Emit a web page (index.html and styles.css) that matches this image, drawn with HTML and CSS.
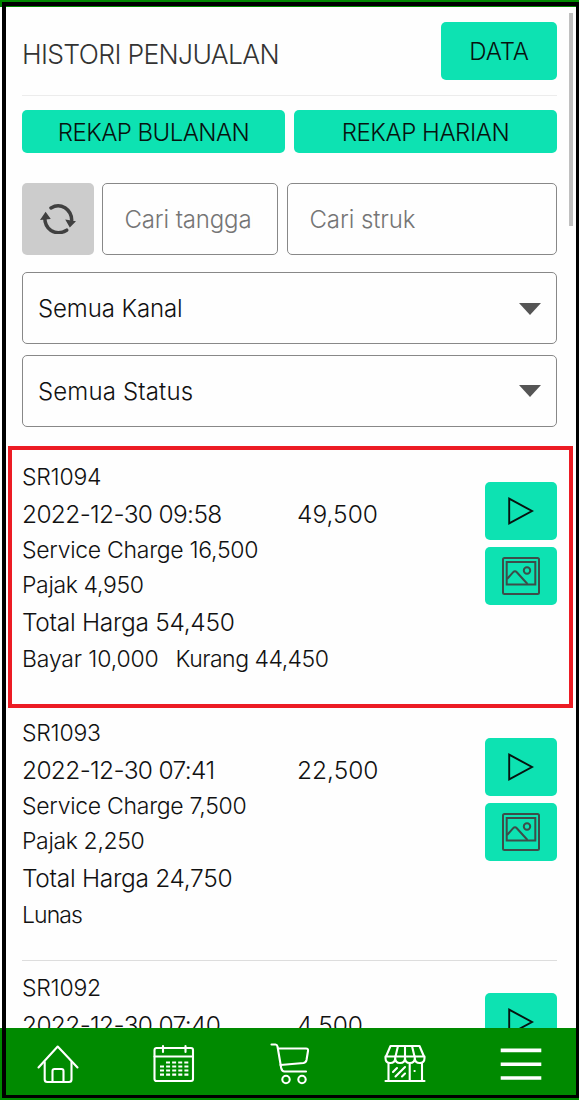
FILE: index.html
```html
<!DOCTYPE html>
<html lang="id">
<head>
<meta charset="utf-8">
<title>Histori Penjualan</title>
<link rel="stylesheet" href="styles.css">
</head>
<body>
<svg class="sprite" aria-hidden="true">
  <symbol id="play" viewBox="0 0 26 28"><path d="M1.2 1.6V26.4L24 14Z" fill="none" stroke="#07120f" stroke-width="1.9"/></symbol>
  <symbol id="photo" viewBox="0 0 38 38"><g fill="none" stroke="#3d4d49" stroke-width="2"><rect x="1" y="1" width="36" height="36" rx="1.5"/><rect x="4.7" y="5" width="28.6" height="22.5"/><path d="M5 22L11.2 15.2Q13 13.3 14.8 15.2L25.5 27"/><circle cx="25" cy="13.5" r="3.2"/></g></symbol>
</svg>
<div class="screen">
  <div class="topbar"></div>
  <main class="content">
    <header class="header">
      <h1 class="title"><span>HISTORI PENJUALAN</span></h1>
      <button class="btn btn-data"><span>DATA</span></button>
    </header>
    <div class="recaps">
      <button class="btn"><span class="monthly">REKAP BULANAN</span></button>
      <button class="btn"><span class="daily">REKAP HARIAN</span></button>
    </div>
    <div class="search">
      <button class="refresh">
        <svg width="36" height="30" viewBox="0 0 36 30"><g fill="none" stroke="#404040" stroke-width="3.5" stroke-linecap="round"><path d="M11 3.9Q18 -.2 25 3.7Q31.5 8 31.7 16"/><path d="M26.7 26.2Q18.5 31 11 26.5Q4.8 22.3 4.8 14"/></g><path d="M25.2 15.6L36 17.2L29.8 23.5ZM0 15.9L5.6 7.8L10.8 15Z" fill="#404040"/></svg>
      </button>
      <div class="field field-date"><span class="clip"><span class="ph-date">Cari tanggal</span></span></div>
      <div class="field field-receipt"><span class="ph-receipt">Cari struk</span></div>
    </div>
    <div class="select"><span class="channel">Semua Kanal</span><i class="caret"></i></div>
    <div class="select"><span class="status">Semua Status</span><i class="caret"></i></div>
    <section class="sales">
      <article class="sale selected">
        <div class="lines">
          <p class="code"><span>SR1094</span></p>
          <p class="date"><span>2022-12-30 09:58</span><span class="amount">49,500</span></p>
          <p class="service"><span>Service Charge 16,500</span></p>
          <p class="tax"><span>Pajak 4,950</span></p>
          <p class="total"><span>Total Harga 54,450</span></p>
          <p class="paid"><span>Bayar 10,000</span><span class="due">Kurang 44,450</span></p>
        </div>
        <div class="actions">
          <button class="btn"><svg width="26" height="28"><use href="#play"/></svg></button>
          <button class="btn"><svg width="38" height="38"><use href="#photo"/></svg></button>
        </div>
      </article>
      <article class="sale">
        <div class="lines">
          <p class="code"><span>SR1093</span></p>
          <p class="date"><span>2022-12-30 07:41</span><span class="amount">22,500</span></p>
          <p class="service"><span>Service Charge 7,500</span></p>
          <p class="tax"><span>Pajak 2,250</span></p>
          <p class="total"><span>Total Harga 24,750</span></p>
          <p class="paid"><span class="settled">Lunas</span></p>
        </div>
        <div class="actions">
          <button class="btn"><svg width="26" height="28"><use href="#play"/></svg></button>
          <button class="btn"><svg width="38" height="38"><use href="#photo"/></svg></button>
        </div>
      </article>
      <article class="sale last">
        <div class="lines">
          <p class="code"><span>SR1092</span></p>
          <p class="date"><span>2022-12-30 07:40</span><span class="amount">4,500</span></p>
        </div>
        <div class="actions">
          <button class="btn"><svg width="26" height="28"><use href="#play"/></svg></button>
        </div>
      </article>
    </section>
  </main>
  <nav class="nav">
    <a><svg width="42" height="42" viewBox="0 0 42 42"><g class="ico"><path d="M1.5 24.5L20.7 3.5L40.5 24.5"/><path d="M7.7 19V36.5Q7.7 39 10.2 39H32Q34.5 39 34.5 36.5V19"/><path d="M15.5 39V28Q15.5 26 17.5 26H24.5Q26.5 26 26.5 28V39"/></g></svg></a>
    <a><svg width="42" height="42" viewBox="0 0 42 42"><g class="ico"><rect x="1.5" y="5" width="38.5" height="33" rx="2"/><path d="M1.5 13.5H40M10 3V9M32.5 3V9"/><path d="M13 19.5H36M7 23.5H36M7 27.5H36M7 31.7H36" stroke-dasharray="4 2.1" stroke-linecap="butt" stroke-width="2.2"/></g></svg></a>
    <a class="cart"><svg width="42" height="42" viewBox="0 0 42 42"><g class="ico"><path d="M1.5 1.5H5.5Q7 1.5 7.5 3.5L11.2 25Q12 28.5 14.5 28.5H36"/><path d="M8 5.5H36Q38.5 5.5 38 8L36.5 17Q36 19.5 33.5 20L10.5 22"/><circle cx="16" cy="36.5" r="3.7"/><circle cx="32" cy="36.5" r="3.7"/></g></svg></a>
    <a><svg width="42" height="42" viewBox="0 0 42 42"><g class="ico"><path d="M6.5 3H35.5L40 13.5H2ZM14 3L11.5 13.5M21 3V13.5M28 3L30.5 13.5"/><path d="M1.5 13.5V15Q1.5 20 6.2 20Q11.2 20 11.2 15V13.5V15Q11.2 20 16 20Q21 20 21 15V13.5V15Q21 20 25.8 20Q30.8 20 30.8 15V13.5V15Q30.8 20 35.7 20Q40.5 20 40.5 15V13.5M4.5 20V38M38 20V38M1.5 38H40.5M25.7 20V38M9 29L13 25M11.5 33.5L21 24M18 33.5L21 30.5M30.5 28H30.7"/></g></svg></a>
    <a><svg width="42" height="42" viewBox="0 0 42 42"><path d="M.7 7.4H41.3M.7 21.2H41.3M.7 35H41.3" stroke="#fff" stroke-width="3.6"/></svg></a>
  </nav>
  <div class="scrollbar"></div>
  <div class="frame"></div>
</div>
</body>
</html>
```
FILE: styles.css
```css
* { box-sizing: border-box; }
body { margin: 0; background: #fff; font-family: Inter, "Liberation Sans", sans-serif; font-weight: 340; color: #111; }
h1, p { margin: 0; font-weight: inherit; }
button { border: 0; padding: 0; font: inherit; color: inherit; }
svg { display: block; }
.sprite { position: absolute; width: 0; height: 0; }
.screen { position: relative; width: 579px; height: 1100px; display: flex; flex-direction: column; overflow: hidden; background: #fefefe; }
.topbar { flex: none; height: 7px; background: #008a00; }
.content { flex: 1; min-height: 0; overflow: hidden; padding: 15px 22px 0; white-space: nowrap; }
.header { display: flex; justify-content: space-between; height: 73.5px; border-bottom: 1.5px solid #ececec; }
.title { display: flex; align-items: center; height: 64px; font-size: 26.5px; letter-spacing: -.65px; color: #333; }
.btn { display: flex; align-items: center; justify-content: center; background: #0de2b2; border-radius: 5px; font-size: 24px; color: #07120f; }
.btn-data { width: 116px; height: 57.5px; padding-top: 1px; letter-spacing: -.2px; }
.recaps { display: grid; grid-template-columns: 1fr 1fr; gap: 9px; height: 43px; margin-top: 14.5px; }
.recaps .btn { padding-top: 1px; }
.monthly { letter-spacing: -.55px; }
.daily { letter-spacing: -.45px; }
.search { display: flex; height: 72px; margin-top: 29.5px; }
.refresh { display: flex; align-items: center; justify-content: center; width: 72px; margin-right: 7.5px; border-radius: 5px; background: #ccc; }
.field { display: flex; align-items: center; border: 1.5px solid #888; border-radius: 5px; padding: 1px 22px 0; font-size: 24px; color: #757575; }
.field-date { width: 176.5px; margin-right: 8.5px; letter-spacing: -.15px; }
.field-receipt { flex: 1; letter-spacing: -.1px; }
.clip { width: 128px; overflow: hidden; }
.select { display: flex; align-items: center; justify-content: space-between; height: 72px; margin-top: 17.5px; padding: 1px 15px 0; border: 1.5px solid #888; border-radius: 5px; font-size: 24px; }
.select + .select { margin-top: 10.5px; }
.channel { letter-spacing: -.1px; }
.status { letter-spacing: .15px; }
.caret { border: 11px solid transparent; border-top: 12px solid #555; border-bottom: 0; }
.sales { margin: 19.5px -14px 0; }
.sale { display: flex; justify-content: space-between; height: 256px; padding: 0 14px; }
.selected { width: 565px; height: 262px; padding: 9px 12px 0 10px; border: 4px solid #ec1c24; }
.selected + .sale { height: 253px; margin: 0 14px; padding: 7px 0 0; border-bottom: 1.5px solid #ddd; }
.last { padding-top: 9px; }
.lines p { display: flex; align-items: center; }
.code { height: 36px; font-size: 23px; letter-spacing: -.25px; }
.date { height: 37px; font-size: 24.5px; }
.date > :first-child { width: 275px; letter-spacing: -.65px; }
.service { height: 35px; font-size: 23px; letter-spacing: -.28px; }
.tax { height: 36px; font-size: 23px; letter-spacing: -.35px; }
.total { height: 38px; font-size: 24.5px; letter-spacing: -.3px; }
.paid { height: 35px; font-size: 23px; gap: 17px; letter-spacing: -.15px; }
.due { letter-spacing: -.5px; }
.settled { letter-spacing: -.9px; }
.actions { display: flex; flex-direction: column; gap: 7px; padding-top: 23px; }
.actions .btn { width: 72px; height: 58px; flex: none; }
.nav { flex: none; display: grid; grid-template-columns: repeat(5, 1fr); height: 72px; background: #008a00; }
.nav a { display: flex; align-items: center; justify-content: center; }
.nav .cart { padding-left: 3px; }
.ico { fill: none; stroke: #fff; stroke-width: 2.1; stroke-linecap: round; stroke-linejoin: round; }
.scrollbar { position: absolute; top: 13px; right: 6px; width: 4px; height: 213px; background: #c0c0c0; }
.frame { position: absolute; inset: 2px 0 2px 2px; border: 4px solid #000; border-right-width: 3px; border-bottom-width: 3px; }
```
